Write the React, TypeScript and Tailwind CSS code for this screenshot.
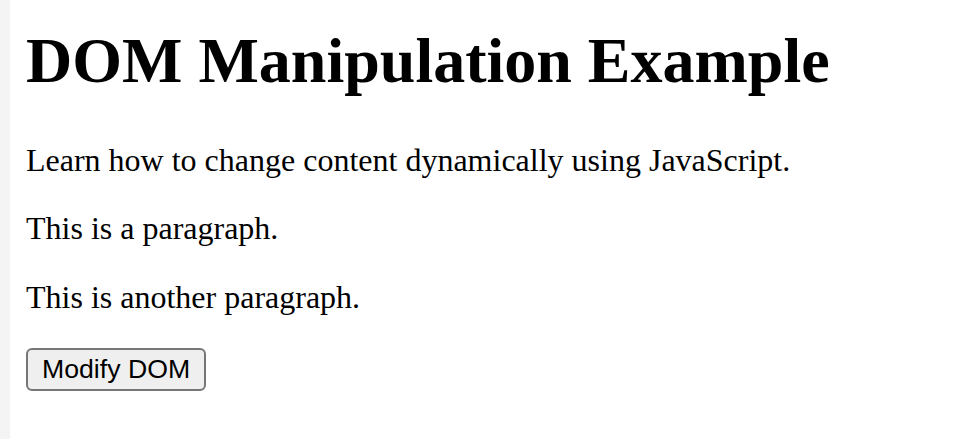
export default function App() {
  return (
    <div className="flex min-h-[439px] bg-white text-black">
      {/* left gutter */}
      <div className="w-[10px] shrink-0 bg-[#f4f4f4]" />

      <main className="flex-1 pl-4 pt-[24px] font-['Liberation_Serif',serif]">
        <h1 className="text-[64px] font-bold leading-[1.15] mb-[44px]">DOM Manipulation Example</h1>
        <p className="text-[32px] leading-[1.15] mb-8">Learn how to change content dynamically using JavaScript.</p>
        <p className="text-[32px] leading-[1.15] mb-8">This is a paragraph.</p>
        <p className="text-[32px] leading-[1.15] mb-8">This is another paragraph.</p>
        <button
          type="button"
          className="h-[43px] px-[14px] border-2 border-[#767676] rounded-[6px] bg-[#efefef] text-[26.67px] leading-none font-['Liberation_Sans',Arial,sans-serif] text-black"
        >
          Modify DOM
        </button>
      </main>
    </div>
  )
}
